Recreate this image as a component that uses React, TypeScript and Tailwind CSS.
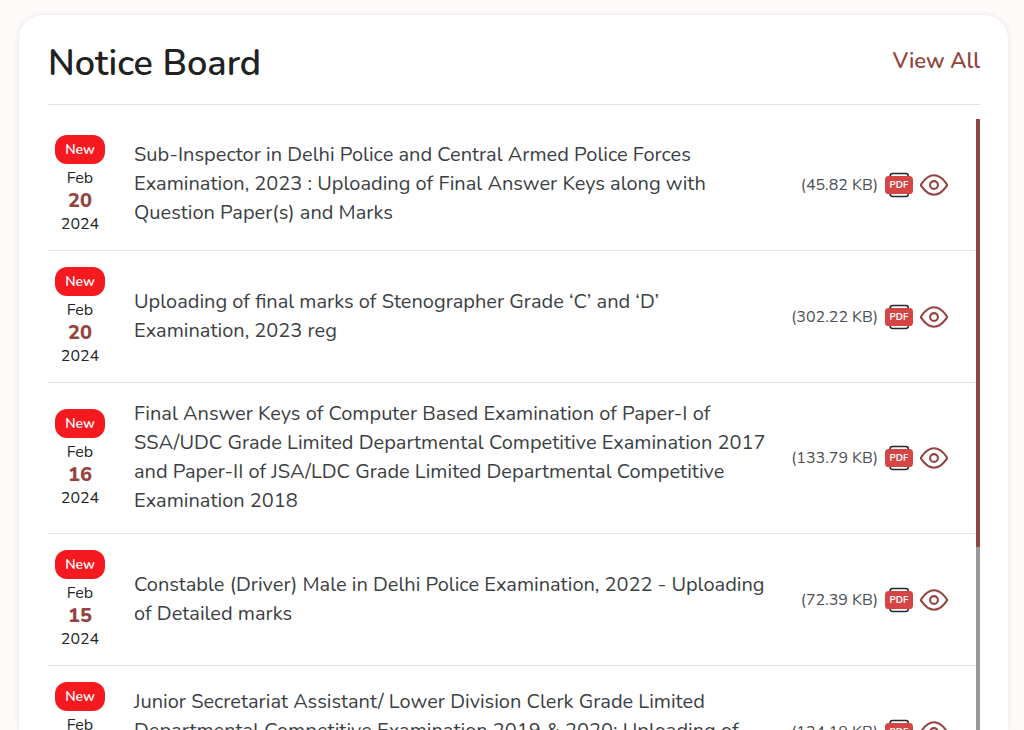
type Notice = {
  day: string;
  month: string;
  year: string;
  title: string;
  size: string;
};

const notices: Notice[] = [
  {
    day: "20",
    month: "Feb",
    year: "2024",
    title:
      "Sub-Inspector in Delhi Police and Central Armed Police Forces\nExamination, 2023 : Uploading of Final Answer Keys along with\nQuestion Paper(s) and Marks",
    size: "45.82 KB",
  },
  {
    day: "20",
    month: "Feb",
    year: "2024",
    title: "Uploading of final marks of Stenographer Grade ‘C’ and ‘D’\nExamination, 2023 reg",
    size: "302.22 KB",
  },
  {
    day: "16",
    month: "Feb",
    year: "2024",
    title:
      "Final Answer Keys of Computer Based Examination of Paper-I of\nSSA/UDC Grade Limited Departmental Competitive Examination 2017\nand Paper-II of JSA/LDC Grade Limited Departmental Competitive\nExamination 2018",
    size: "133.79 KB",
  },
  {
    day: "15",
    month: "Feb",
    year: "2024",
    title: "Constable (Driver) Male in Delhi Police Examination, 2022 - Uploading\nof Detailed marks",
    size: "72.39 KB",
  },
  {
    day: "15",
    month: "Feb",
    year: "2024",
    title:
      "Junior Secretariat Assistant/ Lower Division Clerk Grade Limited\nDepartmental Competitive Examination 2019 & 2020: Uploading of\nDetailed marks",
    size: "124.19 KB",
  },
];

function PdfIcon() {
  return (
    <svg width="28" height="26" viewBox="0 0 28 26" aria-hidden="true">
      <rect x="5" y="1.6" width="18.4" height="22.8" rx="2.6" fill="#fff" stroke="#24272b" strokeWidth="1.5" />
      <rect x="0" y="4" width="28" height="18" rx="3.6" fill="#d64545" />
      <text
        x="14"
        y="16.2"
        textAnchor="middle"
        fill="#fff"
        fontSize="9.5"
        fontWeight="700"
        fontFamily="Nunito, 'Open Sans', sans-serif"
      >
        PDF
      </text>
    </svg>
  );
}

function EyeIcon() {
  return (
    <svg width="28" height="22" viewBox="0 0 28 22" fill="none" stroke="#944440" strokeWidth="2.1" aria-hidden="true">
      <path
        d="M1.6 12.4C.8 11.5.8 10.5 1.6 9.6C5 4.800 9 1.300 14 1.300S23 4.800 26.400 9.600C27.200 10.500 27.200 11.500 26.400 12.400C23 17.200 19 20.700 14 20.700S5 17.200 1.600 12.400Z"
        strokeLinejoin="round"
      />
      <circle cx="14" cy="11" r="3.900" />
    </svg>
  );
}

function NoticeRow({ notice }: { notice: Notice }) {
  return (
    <li className="flex items-center border-b border-[#e3e4e5]">
      <div className="flex w-16 shrink-0 flex-col items-center pt-4 pb-3.5 text-base text-[#212529]">
        <span className="mb-0.5 rounded-xl bg-[#f51a20] px-2.5 text-sm leading-[29px] font-semibold text-white">New</span>
        <span className="leading-6">{notice.month}</span>
        <strong className="text-xl leading-[22px] font-extrabold text-[#944440]">{notice.day}</strong>
        <span className="leading-6">{notice.year}</span>
      </div>
      <p className="ml-[22px] min-w-0 flex-1 pt-4 pb-[18px] text-xl leading-[29px] whitespace-pre-line text-[#3b3f44]">
        {notice.title}
      </p>
      <div className="mr-7 flex shrink-0 items-center gap-[7px]">
        <span className="text-base text-[#4c4f54]">({notice.size})</span>
        <a href="#pdf" aria-label={`Download PDF, ${notice.size}`}>
          <PdfIcon />
        </a>
        <a href="#view" aria-label="View notice">
          <EyeIcon />
        </a>
      </div>
    </li>
  );
}

export default function App() {
  return (
    <main className="flex h-screen flex-col overflow-hidden bg-[#fffafa] pt-[15px] pr-4 pl-[19px] font-[Nunito,'Open_Sans',sans-serif]">
      <section className="flex min-h-0 flex-1 flex-col rounded-t-3xl bg-white pr-7 pl-[29px] shadow-[0_0_6px_rgba(0,0,0,0.09)]">
        <header className="flex h-[90px] shrink-0 items-start justify-between border-b border-[#e0e1e2] pt-6">
          <h1 className="text-[36px] leading-[50px] font-semibold text-[#212121]">Notice Board</h1>
          <a href="#all" className="text-[22px] leading-[44px] font-semibold text-[#944440]">
            View All
          </a>
        </header>
        <div className="mt-3.5 flex min-h-0 flex-1 overflow-hidden">
          <ul className="min-w-0 flex-1">
            {notices.map((notice) => (
              <NoticeRow key={notice.title} notice={notice} />
            ))}
          </ul>
          <div className="w-1 shrink-0 bg-[#999]">
            <div className="h-[70%] bg-[#944440]" />
          </div>
        </div>
      </section>
    </main>
  );
}
